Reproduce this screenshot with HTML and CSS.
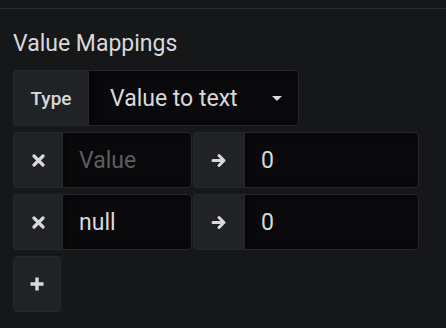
FILE: index.html
```html
<!DOCTYPE html>
<html lang="en">
<head>
  <meta charset="UTF-8">
  <title>Value Mappings</title>
  <link rel="stylesheet" href="styles.css">
</head>
<body>
  <div class="divider"></div>

  <section class="mappings">
    <h5 class="section-title">Value Mappings</h5>

    <div class="form-row">
      <label class="form-label label-type">Type</label>
      <div class="form-select">
        <span>Value to text</span>
        <span class="caret"></span>
      </div>
    </div>

    <!-- mapping rows -->
    <div class="form-row">
      <div class="form-group group-from">
        <button class="form-label icon-btn" title="Remove">
          <svg width="13" height="13" viewBox="0 0 13 13"><path d="M2 2 L11 11 M11 2 L2 11" stroke="#d8d9da" stroke-width="3.2" stroke-linecap="round"/></svg>
        </button>
        <input class="form-input" type="text" placeholder="Value">
      </div>
      <div class="form-group group-to">
        <span class="form-label icon-btn">
          <svg width="16" height="15" viewBox="0 0 16 15"><path d="M2 7.5 H13 M8 2.5 L13 7.5 L8 12.5" fill="none" stroke="#d8d9da" stroke-width="3" stroke-linecap="round" stroke-linejoin="round"/></svg>
        </span>
        <input class="form-input" type="text" value="0">
      </div>
    </div>

    <div class="form-row">
      <div class="form-group group-from">
        <button class="form-label icon-btn" title="Remove">
          <svg width="13" height="13" viewBox="0 0 13 13"><path d="M2 2 L11 11 M11 2 L2 11" stroke="#d8d9da" stroke-width="3.2" stroke-linecap="round"/></svg>
        </button>
        <input class="form-input" type="text" value="null">
      </div>
      <div class="form-group group-to">
        <span class="form-label icon-btn">
          <svg width="16" height="15" viewBox="0 0 16 15"><path d="M2 7.5 H13 M8 2.5 L13 7.5 L8 12.5" fill="none" stroke="#d8d9da" stroke-width="3" stroke-linecap="round" stroke-linejoin="round"/></svg>
        </span>
        <input class="form-input" type="text" value="0">
      </div>
    </div>

    <div class="form-row">
      <button class="form-label icon-btn add-btn" title="Add mapping">
        <svg width="16" height="16" viewBox="0 0 16 16"><path d="M8 1.5 V14.5 M1.5 8 H14.5" stroke="#d8d9da" stroke-width="3.4"/></svg>
      </button>
    </div>
  </section>
</body>
</html>
```

FILE: styles.css
```css
/* Reset & Fonts */
* {
  margin: 0;
  padding: 0;
  box-sizing: border-box;
}

body {
  font-family: Roboto, 'Liberation Sans', sans-serif;
  color: #d8d9da;
  background-color: #161719;
  padding-top: 8px;
}

.divider {
  height: 1px;
  background-color: #2c2d30;
}

/* Section */
.mappings {
  padding: 0 13px;
}

.section-title {
  font-size: 23px;
  font-weight: 400;
  line-height: 27px;
  margin: 21px 0 13px;
  color: #d8d9da;
}

/* Form rows */
.form-row {
  display: flex;
  height: 56px;
  margin-bottom: 6px;
}

.form-group {
  display: flex;
}

.group-from {
  width: 179px;
  margin-right: 1px;
}

.group-to {
  width: 226px;
}

.form-label {
  display: flex;
  align-items: center;
  justify-content: center;
  background-color: #202226;
  border: 1px solid #27282b;
  border-right: none;
  border-radius: 4px 0 0 4px;
  color: #d8d9da;
  font-family: inherit;
}

.label-type {
  width: 75px;
  font-size: 19px;
  font-weight: 500;
}

.icon-btn {
  width: 49px;
  flex-shrink: 0;
  cursor: pointer;
}

.group-to .icon-btn {
  width: 51px;
}

.add-btn {
  width: 48px;
  border-right: 1px solid #27282b;
  border-radius: 4px;
}

.form-input,
.form-select {
  flex: 1;
  min-width: 0;
  height: 100%;
  background-color: #09090b;
  border: 1px solid #27282b;
  border-radius: 0 4px 4px 0;
  box-shadow: inset 6px 0 6px -4px rgba(0, 0, 0, 0.6);
  color: #d8d9da;
  font-family: inherit;
  font-size: 23px;
  padding: 0 16px;
  outline: none;
}

.form-input::placeholder {
  color: #5c5d61;
}

.form-select {
  flex: none;
  width: 211px;
  display: flex;
  align-items: center;
  justify-content: space-between;
  padding: 0 16px 0 21px;
}

.caret {
  width: 0;
  height: 0;
  border-left: 5px solid transparent;
  border-right: 5px solid transparent;
  border-top: 5px solid #d8d9da;
}
```
